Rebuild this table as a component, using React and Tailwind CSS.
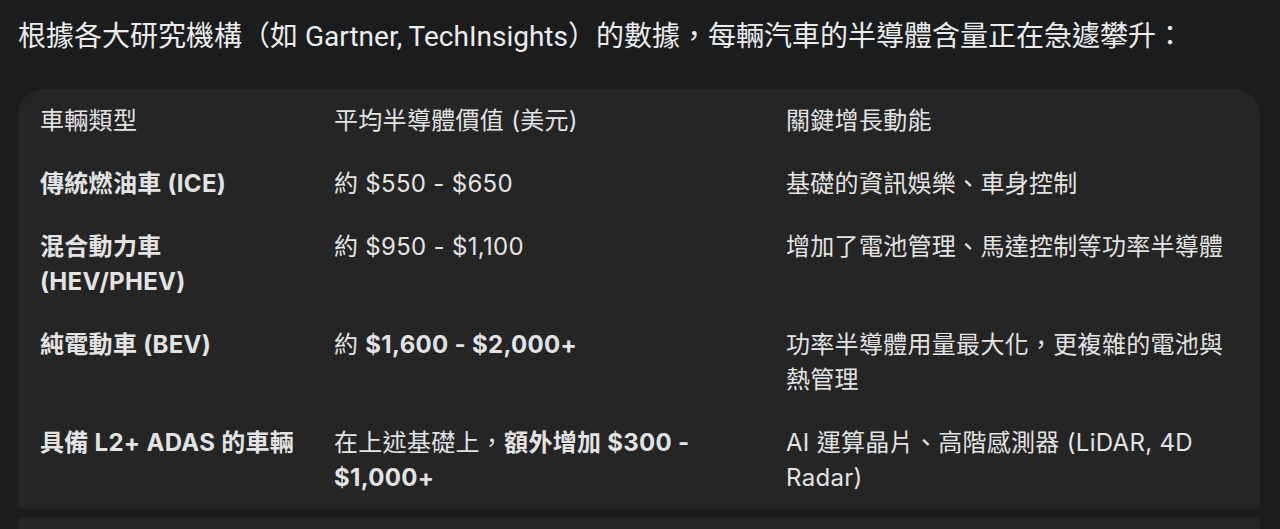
import React from "react";

const rows = [
  {
    a: "傳統燃油車 (ICE)",
    b: <>約 $550 - $650</>,
    c: "基礎的資訊娛樂、車身控制",
  },
  {
    a: "混合動力車 (HEV/PHEV)",
    b: <>約 $950 - $1,100</>,
    c: "增加了電池管理、馬達控制等功率半導體",
  },
  {
    a: "純電動車 (BEV)",
    b: (
      <>
        約 <span className="font-bold">$1,600 - $2,000+</span>
      </>
    ),
    c: "功率半導體用量最大化，更複雜的電池與熱管理",
  },
  {
    a: "具備 L2+ ADAS 的車輛",
    b: (
      <>
        在上述基礎上，<span className="font-bold">額外增加 $300 - $1,000+</span>
      </>
    ),
    c: "AI 運算晶片、高階感測器 (LiDAR, 4D Radar)",
  },
];

export default function App() {
  return (
    <div className="h-[529px] bg-[#1b1c1e] text-[#e3e3e3] overflow-hidden">
      <p
        className="pl-[18px] pt-[18px] text-[28px] leading-[38px] text-[#ececec]"
        style={{ fontFamily: 'Roboto, "Noto Sans CJK TC", sans-serif' }}
      >
        根據各大研究機構（如 Gartner, TechInsights）的數據，每輛汽車的半導體含量正在急遽攀升：
      </p>
      <div className="mx-[18px] mt-[33px] w-[1242px] rounded-t-[26px] rounded-b-[5px] bg-[#252526] px-[22px]">
        <div
          className="grid grid-cols-[258px_416px_452px] gap-x-[36px] text-[24px] leading-[35px] tracking-[0.3px]"
          style={{ fontFamily: 'Inter, "Noto Sans CJK TC", sans-serif' }}
        >
          <div className="py-[14px]">車輛類型</div>
          <div className="py-[14px]">平均半導體價值 (美元)</div>
          <div className="py-[14px]">關鍵增長動能</div>
          {rows.map((r, i) => (
            <React.Fragment key={i}>
              <div className="py-[14px] font-bold">{r.a}</div>
              <div className="py-[14px]">{r.b}</div>
              <div className="py-[14px]">{r.c}</div>
            </React.Fragment>
          ))}
        </div>
      </div>
      <div className="mx-[18px] mt-[8px] h-[40px] w-[1242px] rounded-[5px] bg-[#252526]" />
    </div>
  );
}
